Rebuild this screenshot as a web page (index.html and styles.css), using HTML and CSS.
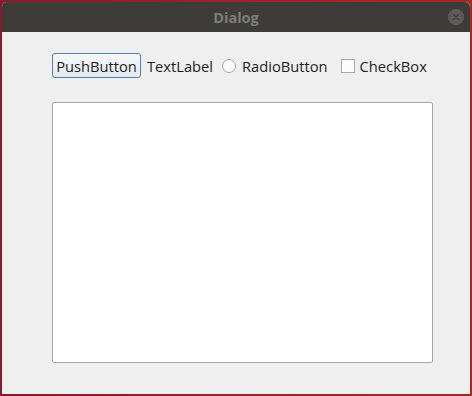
FILE: index.html
```html
<!DOCTYPE html>
<html lang="en">
<head>
    <meta charset="UTF-8">
    <title>Dialog</title>
    <link rel="stylesheet" href="styles.css">
</head>
<body>
    <div class="window">
        <div class="titlebar">
            <span class="title">Dialog</span>
            <span class="close">
                <svg width="16" height="16" viewBox="0 0 16 16">
                    <path d="M5.5 5.5 L10.5 10.5 M10.5 5.5 L5.5 10.5" stroke="#3c3b37" stroke-width="1.4" stroke-linecap="round"/>
                </svg>
            </span>
        </div>
        <div class="content">
            <div class="row">
                <button class="push">PushButton</button>
                <span class="label">TextLabel</span>
                <label class="radio"><span class="circle"></span>RadioButton</label>
                <label class="check"><span class="box"></span>CheckBox</label>
            </div>
            <div class="textedit"></div>
        </div>
    </div>
</body>
</html>
```

FILE: styles.css
```css
body {
    margin: 0;
    height: 396px;
    overflow: hidden;
    background: linear-gradient(90deg, #8a1a2e, #9c2428 50%, #a42a26);
    font-family: "Open Sans", "DejaVu Sans", sans-serif;
}
.window {
    margin: 2px;
    height: 392px;
    background-color: #efefef;
    border-radius: 5px 5px 0 0;
    overflow: hidden;
}
.titlebar {
    height: 30px;
    background-color: #3d3c38;
    display: flex;
    align-items: center;
    justify-content: center;
    position: relative;
}
.title {
    color: #7f7e79;
    font-weight: bold;
    font-size: 14.5px;
}
.close {
    position: absolute;
    right: 6px;
    top: 7px;
    width: 16px;
    height: 16px;
    border-radius: 50%;
    background-color: #5e5d59;
    display: flex;
}
.content {
    padding: 21px 0 0 50px;
}
.row {
    display: flex;
    align-items: center;
    height: 25px;
    font-size: 14.7px;
    color: #1e1e1e;
}
.push {
    height: 25px;
    width: 89px;
    padding: 0;
    font: inherit;
    color: inherit;
    border: 1px solid #4e7fae;
    border-radius: 3px;
    background: linear-gradient(#f6f8fa, #e4eaf0);
}
.label {
    margin-left: 6px;
}
.radio, .check {
    display: flex;
    align-items: center;
}
.radio {
    margin-left: 9px;
}
.circle {
    width: 12px;
    height: 12px;
    border: 1px solid #a4a4a4;
    border-radius: 50%;
    background-color: #fcfcfc;
    margin-right: 6px;
}
.check {
    margin-left: 13px;
}
.box {
    width: 12px;
    height: 12px;
    border: 1px solid #a8a8a8;
    background-color: #fcfcfc;
    margin-right: 5px;
}
.textedit {
    margin-top: 24px;
    width: 379px;
    height: 259px;
    border: 1px solid #a7a7a7;
    border-radius: 2px;
    background-color: #fff;
}
```
